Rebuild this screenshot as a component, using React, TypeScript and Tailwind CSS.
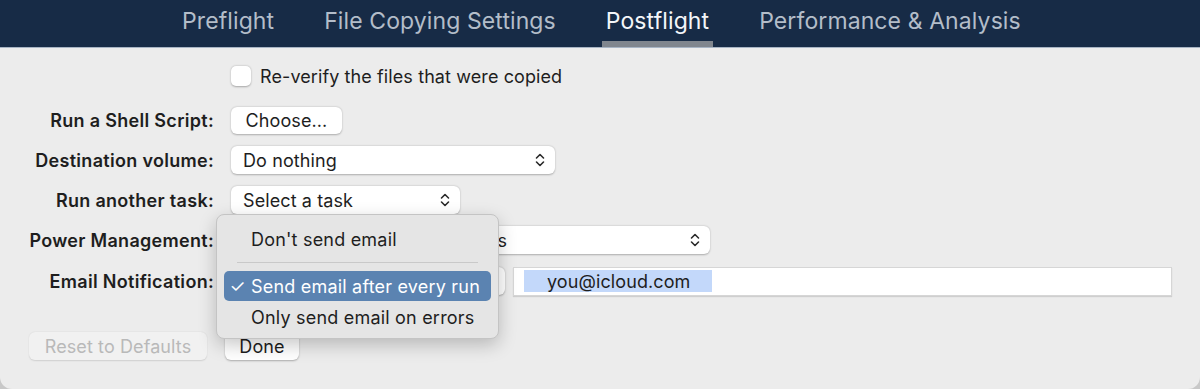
import React from 'react';

const font = { fontFamily: 'Inter, "Noto Sans", sans-serif' };

const Chevrons = () => (
  <svg width="10" height="14" viewBox="0 0 10 14" fill="none" stroke="#2a2a2a" strokeWidth="1.6" strokeLinecap="round" strokeLinejoin="round">
    <path d="M1.5 5 L5 1.5 L8.5 5" />
    <path d="M1.5 9 L5 12.5 L8.5 9" />
  </svg>
);

const Label = ({ children }: { children: React.ReactNode }) => (
  <div className="w-[214px] shrink-0 text-right text-[18px] font-semibold tracking-[0.3px] text-[#1e1e1e] whitespace-nowrap">{children}</div>
);

const Select = ({ text, width }: { text: string; width: string }) => (
  <div className={`${width} h-[28px] bg-white rounded-[6px] shadow-[0_0.5px_2px_rgba(0,0,0,0.28)] flex items-center justify-between pl-[12px] pr-[10px] text-[18px] tracking-[0.1px] text-[#1e1e1e]`}>
    <span className="whitespace-nowrap">{text}</span>
    <Chevrons />
  </div>
);

const tabs = ['Preflight', 'File Copying Settings', 'Postflight', 'Performance & Analysis'];

export default function App() {
  return (
    <div className="w-[1200px] h-[389px] bg-[#c8c8c8] overflow-hidden" style={font}>
      <div className="h-full bg-[#ececec] rounded-b-[12px] flex flex-col relative">
        {/* tab bar */}
        <div className="h-[48px] bg-[#172b46] border-b border-[#a7b4c4] flex items-stretch pl-[180px] gap-[46px]">
          {tabs.map((t) => (
            <div key={t} className="relative flex items-start pt-[4px] px-[2px]">
              <span className={`text-[23px] tracking-[0.1px] whitespace-nowrap ${t === 'Postflight' ? 'text-[#f4f6f9]' : 'text-[#b3bdc9]'}`}>{t}</span>
              {t === 'Postflight' && (
                <div className="absolute left-[-2px] right-[-2px] bottom-0 h-[6px] bg-[#80868e]" />
              )}
            </div>
          ))}
        </div>

        {/* form */}
        <div className="flex flex-col pt-[18px] text-[18px] tracking-[0.1px] text-[#1e1e1e]">
          <div className="h-[20px] flex items-center pl-[231px] gap-[9px]">
            <div className="w-[20px] h-[20px] bg-white rounded-[5px] shadow-[0_0.5px_2px_rgba(0,0,0,0.3)]" />
            <span>Re-verify the files that were copied</span>
          </div>

          <div className="h-[40px] mt-[14px] flex items-center gap-[17px]">
            <Label>Run a Shell Script:</Label>
            <div className="w-[111px] h-[27px] bg-white rounded-[6px] shadow-[0_0.5px_2px_rgba(0,0,0,0.28)] flex items-center justify-center">
              Choose...
            </div>
          </div>

          <div className="h-[40px] flex items-center gap-[17px]">
            <Label>Destination volume:</Label>
            <Select text="Do nothing" width="w-[324px]" />
          </div>

          <div className="h-[40px] flex items-center gap-[17px]">
            <Label>Run another task:</Label>
            <Select text="Select a task" width="w-[229px]" />
          </div>

          <div className="h-[40px] flex items-center gap-[17px]">
            <Label>Power Management:</Label>
            <Select text="Prevent idle sleep during tasks" width="w-[479px]" />
          </div>

          <div className="h-[42px] flex items-center gap-[17px]">
            <Label>Email Notification:</Label>
            <div className="w-[274px] h-[28px] bg-white rounded-[6px] shadow-[0_0.5px_2px_rgba(0,0,0,0.28)]" />
            <div className="w-[659px] h-[29px] ml-[-9px] bg-white border border-[#d6d6d6] shadow-[0_1px_1px_rgba(0,0,0,0.12)] flex items-center pl-[10px]">
              <span className="bg-[#c3d8fa] pl-[23px] h-[22px] flex items-center w-[188px]">you@icloud.com</span>
            </div>
          </div>

          <div className="flex items-center mt-[30px] pl-[29px] gap-[18px]">
            <div className="w-[178px] h-[28px] bg-[#f1f1f1] rounded-[6px] shadow-[0_0.5px_1.5px_rgba(0,0,0,0.12)] flex items-center justify-center text-[#b9b9b9] whitespace-nowrap">
              Reset to Defaults
            </div>
            <div className="w-[74px] h-[28px] bg-white rounded-[6px] shadow-[0_0.5px_2px_rgba(0,0,0,0.28)] flex items-center justify-center">
              Done
            </div>
          </div>
        </div>

        {/* open popup menu */}
        <div className="absolute left-[216px] top-[214px] w-[283px] h-[125px] bg-[#e5e5e5] border border-[#c4c4c4] rounded-[8px] shadow-[0_6px_18px_rgba(0,0,0,0.22)] px-[7px] pt-[9px] text-[18px] tracking-[0.2px] text-[#1e1e1e]">
          <div className="h-[30px] flex items-center pl-[27px]">Don't send email</div>
          <div className="mx-[13px] mt-[8px] mb-[8px] h-px bg-[#c9c9c9]" />
          <div className="h-[30px] rounded-[5px] bg-[#5b83b1] text-white flex items-center">
            <span className="w-[27px] text-center text-[18px]">✓</span>
            <span className="whitespace-nowrap">Send email after every run</span>
          </div>
          <div className="h-[33px] flex items-center pl-[27px]">Only send email on errors</div>
        </div>
      </div>
    </div>
  );
}
